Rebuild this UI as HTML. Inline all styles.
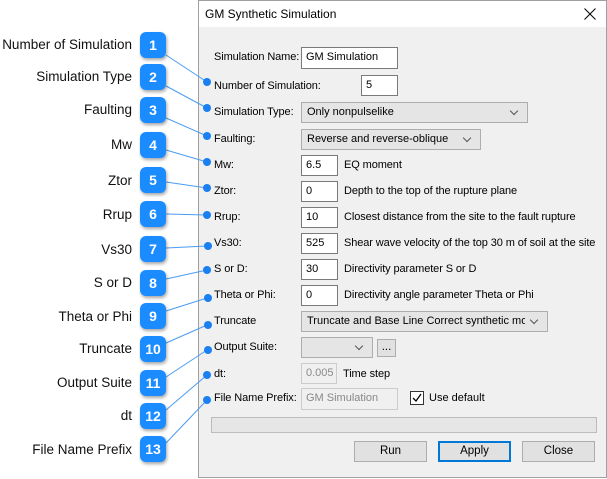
<!DOCTYPE html>
<html><head><meta charset="utf-8"><style>
*{margin:0;padding:0;box-sizing:border-box}
body{width:607px;height:479px;background:#fff;position:relative;overflow:hidden;font-family:"Liberation Sans",sans-serif;}
.a{position:absolute}
.dlg{left:198px;top:0;width:409px;height:478px;background:#f0f0f0;border:1px solid #a0a0a0}
.title{left:0;top:0;width:407px;height:26px;background:#fff;font-size:12px;line-height:26px;padding-left:6px;color:#000}
.lbl{font-size:11px;letter-spacing:-0.1px;color:#000;left:15px;white-space:nowrap}
.box{background:#fff;border:1px solid #7a7a7a;font-size:11px;padding-left:4px;line-height:19px;height:21px;white-space:nowrap;overflow:hidden}
.dis{background:#f0f0f0;border:1px solid #ccc;color:#888}
.cmb{background:#e5e5e5;border:1px solid #adadad;font-size:11px;padding-left:5px;line-height:19px;height:21px}
.cmb::after{content:"";position:absolute;right:10px;top:5px;width:5px;height:5px;border-right:1px solid #555;border-bottom:1px solid #555;transform:rotate(45deg)}
.help{font-size:11px;letter-spacing:-0.1px;left:145px;white-space:nowrap}
.btn{background:#e1e1e1;border:1px solid #adadad;font-size:11.5px;text-align:center;line-height:19px;height:21px}
.badge{left:140px;width:26px;height:26px;border-radius:6px;background:#1a8cff;color:#fff;font-weight:bold;font-size:14px;text-align:center;line-height:26px;box-shadow:1px 2px 3px rgba(0,0,0,.35)}
.cl{right:475px;font-size:13.5px;color:#111;white-space:nowrap}
</style></head><body>
<div class="a dlg">
<div class="a title">GM Synthetic Simulation</div>
<svg class="a" style="left:385px;top:7px" width="12" height="12"><path d="M0.5 0.5L11.5 11.5M11.5 0.5L0.5 11.5" stroke="#000" stroke-width="1"/></svg>
<div class="a lbl" style="top:50px">Simulation Name:</div>
<div class="a box" style="left:102px;top:46px;width:97px;height:22px">GM Simulation</div>
<div class="a lbl" style="top:79px">Number of Simulation:</div>
<div class="a box" style="left:162px;top:74px;width:37px">5</div>
<div class="a lbl" style="top:105px">Simulation Type:</div>
<div class="a cmb" style="left:102px;top:101px;width:227px">Only nonpulselike</div>
<div class="a lbl" style="top:132px">Faulting:</div>
<div class="a cmb" style="left:102px;top:128px;width:180px">Reverse and reverse-oblique</div>
<div class="a lbl" style="top:158px">Mw:</div>
<div class="a box" style="left:102px;top:154px;width:37px">6.5</div>
<div class="a help" style="top:158px">EQ moment</div>
<div class="a lbl" style="top:184px">Ztor:</div>
<div class="a box" style="left:102px;top:180px;width:37px">0</div>
<div class="a help" style="top:184px">Depth to the top of the rupture plane</div>
<div class="a lbl" style="top:210px">Rrup:</div>
<div class="a box" style="left:102px;top:206px;width:37px">10</div>
<div class="a help" style="top:210px">Closest distance from the site to the fault rupture</div>
<div class="a lbl" style="top:236px">Vs30:</div>
<div class="a box" style="left:102px;top:232px;width:37px">525</div>
<div class="a help" style="top:236px">Shear wave velocity of the top 30 m of soil at the site</div>
<div class="a lbl" style="top:262px">S or D:</div>
<div class="a box" style="left:102px;top:258px;width:37px">30</div>
<div class="a help" style="top:262px">Directivity parameter S or D</div>
<div class="a lbl" style="top:288px">Theta or Phi:</div>
<div class="a box" style="left:102px;top:284px;width:37px">0</div>
<div class="a help" style="top:288px">Directivity angle parameter Theta or Phi</div>
<div class="a lbl" style="top:314px">Truncate</div>
<div class="a cmb" style="left:102px;top:310px;width:247px"><span style="display:block;width:218px;overflow:hidden;white-space:nowrap">Truncate and Base Line Correct synthetic motic</span></div>
<div class="a lbl" style="top:340px">Output Suite:</div>
<div class="a cmb" style="left:102px;top:336px;width:72px"></div>
<div class="a btn" style="left:178px;top:338px;width:19px;height:18px;line-height:14px">...</div>
<div class="a lbl" style="top:367px">dt:</div>
<div class="a box dis" style="left:102px;top:362px;width:36px">0.005</div>
<div class="a help" style="left:144px;top:367px">Time step</div>
<div class="a lbl" style="top:391px">File Name Prefix:</div>
<div class="a box dis" style="left:102px;top:387px;width:97px;height:22px">GM Simulation</div>
<div class="a" style="left:211px;top:390px;width:14px;height:14px;background:#fff;border:1px solid #333"><svg width="12" height="12" style="position:absolute;left:0;top:0"><path d="M2 6L5 9L10 2" stroke="#000" stroke-width="1.3" fill="none"/></svg></div>
<div class="a" style="left:230px;top:391px;font-size:11px">Use default</div>
<div class="a" style="left:12px;top:416px;width:386px;height:16px;background:#e6e6e6;border:1px solid #bcbcbc"></div>
<div class="a btn" style="left:155px;top:440px;width:73px">Run</div>
<div class="a btn" style="left:239px;top:440px;width:73px;border:2px solid #0078d7;line-height:17px">Apply</div>
<div class="a btn" style="left:323px;top:440px;width:73px">Close</div>
</div>
<svg class="a" style="left:0;top:0" width="607" height="479">
<g stroke="#4a9cf0" stroke-width="1" fill="none">
<path d="M166 55L207 82"/><path d="M166 86L207 108"/><path d="M166 118L207 136"/><path d="M166 150L207 162"/><path d="M166 182L207 188"/><path d="M166 214L207 215"/><path d="M166 248L207 246"/><path d="M166 279L207 270"/><path d="M166 311L207 298"/><path d="M166 343L207 325"/><path d="M166 377L207 350"/><path d="M166 410L207 375"/><path d="M166 443L207 400"/>
</g>
<g fill="#1a7ff0">
<circle cx="207" cy="82" r="4"/><circle cx="207" cy="108" r="4"/><circle cx="207" cy="136" r="4"/><circle cx="207" cy="162" r="4"/><circle cx="207" cy="188" r="4"/><circle cx="207" cy="215" r="4"/><circle cx="208" cy="246" r="4"/><circle cx="207" cy="270" r="4"/><circle cx="208" cy="298" r="4"/><circle cx="208" cy="325" r="4"/><circle cx="208" cy="350" r="4"/><circle cx="207" cy="375" r="4"/><circle cx="207" cy="400" r="4"/>
</g></svg>
<div class="a badge" style="top:32px">1</div><div class="a cl" style="top:37px">Number of Simulation</div>
<div class="a badge" style="top:64px">2</div><div class="a cl" style="top:69px">Simulation Type</div>
<div class="a badge" style="top:97px">3</div><div class="a cl" style="top:102px">Faulting</div>
<div class="a badge" style="top:132px">4</div><div class="a cl" style="top:137px">Mw</div>
<div class="a badge" style="top:167px">5</div><div class="a cl" style="top:173px">Ztor</div>
<div class="a badge" style="top:201px">6</div><div class="a cl" style="top:207px">Rrup</div>
<div class="a badge" style="top:236px">7</div><div class="a cl" style="top:242px">Vs30</div>
<div class="a badge" style="top:270px">8</div><div class="a cl" style="top:275px">S or D</div>
<div class="a badge" style="top:303px">9</div><div class="a cl" style="top:309px">Theta or Phi</div>
<div class="a badge" style="top:336px">10</div><div class="a cl" style="top:341px">Truncate</div>
<div class="a badge" style="top:370px">11</div><div class="a cl" style="top:375px">Output Suite</div>
<div class="a badge" style="top:403px">12</div><div class="a cl" style="top:408px">dt</div>
<div class="a badge" style="top:436px">13</div><div class="a cl" style="top:442px">File Name Prefix</div>
</body></html>
